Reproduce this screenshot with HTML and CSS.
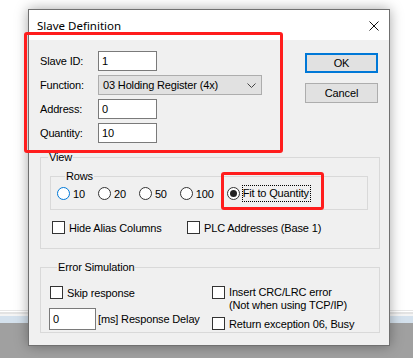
FILE: index.html
```html
<!DOCTYPE html>
<html lang="en">
<head>
  <meta charset="UTF-8" />
  <title>Slave Definition</title>
  <link rel="stylesheet" href="styles.css">
</head>
<body>
  <div class="dialog">
    <div class="titlebar">
      <span class="title">Slave Definition</span>
      <svg class="close" width="10" height="10" viewBox="0 0 10 10">
        <path d="M0.5 0.5 L9.5 9.5 M9.5 0.5 L0.5 9.5" stroke="#111" stroke-width="1" fill="none" />
      </svg>
    </div>

    <div class="content">
      <div class="top">
        <div class="fields">
          <label>Slave ID:</label>
          <input class="edit" type="text" value="1" />
          <label>Function:</label>
          <div class="combo">
            <span>03 Holding Register (4x)</span>
            <svg width="9" height="5" viewBox="0 0 9 5"><path d="M0.5 0.5 L4.5 4.5 L8.5 0.5" stroke="#444" fill="none" /></svg>
          </div>
          <label>Address:</label>
          <input class="edit" type="text" value="0" />
          <label>Quantity:</label>
          <input class="edit" type="text" value="10" />
        </div>
        <div class="buttons">
          <button class="btn btn-default">OK</button>
          <button class="btn">Cancel</button>
        </div>
      </div>

      <fieldset class="group group-view">
        <legend>View</legend>
        <fieldset class="group group-rows">
          <legend>Rows</legend>
          <div class="radios">
            <label class="opt"><input type="radio" name="rows" class="hot" />10</label>
            <label class="opt"><input type="radio" name="rows" />20</label>
            <label class="opt"><input type="radio" name="rows" />50</label>
            <label class="opt"><input type="radio" name="rows" />100</label>
            <label class="opt"><input type="radio" name="rows" checked /><span class="focus">Fit to Quantity</span></label>
          </div>
        </fieldset>
        <div class="checks">
          <label class="opt opt-wide"><input type="checkbox" />Hide Alias Columns</label>
          <label class="opt"><input type="checkbox" />PLC Addresses (Base 1)</label>
        </div>
      </fieldset>

      <fieldset class="group group-error">
        <legend>Error Simulation</legend>
        <div class="error-cols">
          <div class="error-left">
            <label class="opt"><input type="checkbox" />Skip response</label>
            <div class="delay">
              <input class="edit edit-delay" type="text" value="0" />
              <span>[ms] Response Delay</span>
            </div>
          </div>
          <div class="error-right">
            <label class="opt opt-top"><input type="checkbox" /><span>Insert CRC/LRC error<br>(Not when using TCP/IP)</span></label>
            <label class="opt opt-busy"><input type="checkbox" />Return exception 06, Busy</label>
          </div>
        </div>
      </fieldset>
    </div>

    <div class="mark mark-fields"></div>
    <div class="mark mark-fit"></div>
  </div>
</body>
</html>
```

FILE: styles.css
```css
html, body { height: 100%; }
body {
  margin: 0;
  padding: 9px 0 0 28px;
  box-sizing: border-box;
  overflow: hidden;
  font-family: "Liberation Sans", Arial, sans-serif;
  font-size: 11px;
  letter-spacing: -0.15px;
  color: #000;
  background: linear-gradient(to bottom, #fff 0, #fff 310px, #e6e6e6 310px, #e6e6e6 311px, #fff 311px, #fff 312px, #e3e3e3 312px, #e3e3e3 314px, #f4f4f4 314px, #f4f4f4 316px, #d4e1ed 316px, #d4e1ed 323px, #a0a0a0 323px);
}

.dialog {
  position: relative;
  width: 360px;
  border: 1px solid #707070;
  background: #f0f0f0;
  box-shadow: 0 0 12px rgba(0, 0, 0, 0.35);
}

.titlebar { height: 30px; background: #fff; display: flex; align-items: center; justify-content: space-between; padding: 0 10px 0 8px; }
.title { font-family: "Noto Sans", sans-serif; font-size: 11.5px; letter-spacing: 0; }
.close { display: block; margin-top: 1px; }

.content { height: 305px; box-sizing: border-box; padding: 11px 0 0 11px; }

.top { display: flex; justify-content: space-between; padding-right: 11px; }
.fields { display: grid; grid-template-columns: 58px auto; grid-auto-rows: 20px; row-gap: 4px; align-items: center; }
.fields .edit { width: 59px; }

.edit { box-sizing: border-box; height: 20px; border: 1px solid #7a7a7a; background: #fff; font: inherit; letter-spacing: inherit; padding: 0 3px; margin: 0; outline: none; }
.combo { box-sizing: border-box; width: 164px; height: 20px; border: 1px solid #adadad; background: #e1e1e1; display: flex; align-items: center; justify-content: space-between; padding: 0 5px 0 4px; }
.combo svg { display: block; }

.buttons { display: flex; flex-direction: column; gap: 10px; margin-top: 2px; }
.btn { box-sizing: border-box; width: 73px; height: 20px; border: 1px solid #adadad; background: #e1e1e1; font: inherit; letter-spacing: inherit; padding: 0; margin: 0; }
.btn-default { border: 2px solid #0078d7; }

.group { border: 1px solid #d9d9d9; margin: 0; padding: 0; min-width: 0; }
.group legend { margin-left: 7px; padding: 0 1px; line-height: 13px; }
.group-view { width: 340px; box-sizing: border-box; margin-top: 8px; padding: 6px 0 14px 0; }
.group-rows { width: 318px; box-sizing: border-box; margin-left: 9px; padding: 4px 0 9px 6px; }
.group-rows legend { margin-left: 8px; }

.opt { display: flex; align-items: center; white-space: nowrap; }
.opt input { appearance: none; box-sizing: border-box; width: 13px; height: 13px; margin: 0 4px 0 0; border: 1px solid #333; background: #fff; flex: none; }
.opt input[type="radio"] { border-radius: 50%; margin-right: 3px; position: relative; }
.opt input.hot { border-color: #0078d7; }
.opt input[type="radio"]:checked::after { content: ""; position: absolute; left: 2px; top: 2px; width: 7px; height: 7px; border-radius: 50%; background: #222; }

.radios { display: flex; gap: 13px; height: 13px; }
.focus { outline: 1px dotted #000; outline-offset: 0; padding: 0 1px 0 0; line-height: 15px; }

.checks { display: flex; margin: 11px 0 0 11px; }
.opt-wide { width: 135px; }

.group-error { width: 340px; box-sizing: border-box; margin-top: 12px; padding: 12px 0 2px 9px; }
.error-cols { display: flex; }
.error-left { width: 162px; }
.delay { display: flex; align-items: center; margin-top: 9px; margin-left: -1px; }
.edit-delay { width: 47px; height: 22px; margin-right: 2px; }
.opt-top { align-items: flex-start; line-height: 13px; }
.opt-busy { margin-top: 5px; }

.mark { position: absolute; border: 3px solid #ff1d1d; border-radius: 3px; box-sizing: border-box; }
.mark-fields { left: -5px; top: 22px; width: 259px; height: 121px; }
.mark-fit { left: 192px; top: 162px; width: 103px; height: 38px; }
```
